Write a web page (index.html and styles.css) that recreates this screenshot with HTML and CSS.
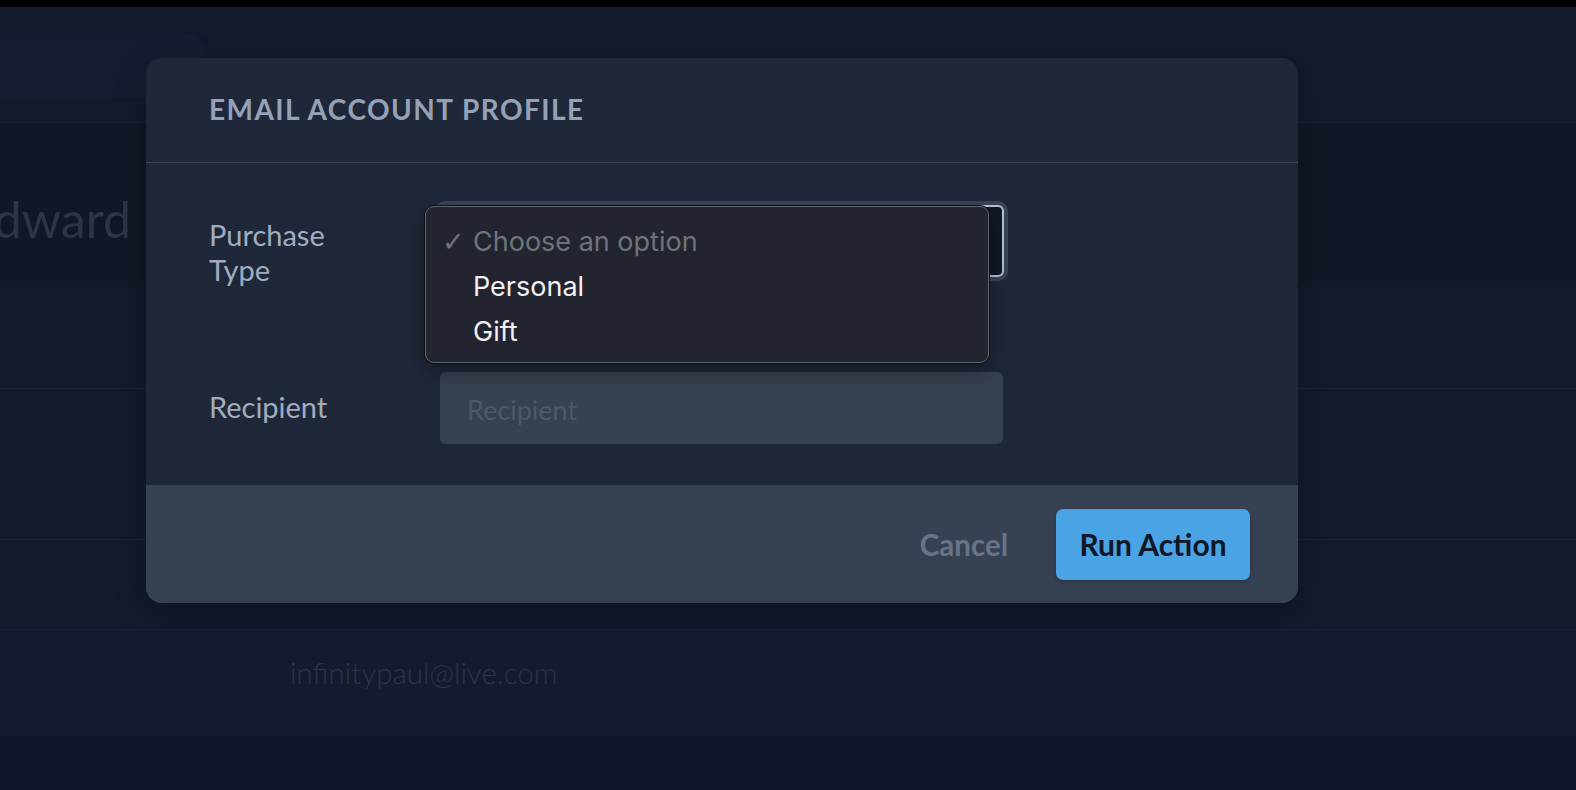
FILE: index.html
```html
<!DOCTYPE html>
<html lang="en">
<head>
  <meta charset="UTF-8">
  <meta name="viewport" content="width=device-width, initial-scale=1.0">
  <title>Email Account Profile</title>
  <link rel="stylesheet" href="styles.css">
</head>
<body>
  <div class="topbar"></div>
  <div class="page">
    <div class="page-head">
      <div class="head-card"></div>
    </div>
    <div class="row row-dark">
      <span class="name">Edward</span>
    </div>
    <div class="row row-a"></div>
    <div class="row row-b"></div>
    <div class="row row-c"></div>
    <div class="row row-d">
      <span class="email">infinitypaul@live.com</span>
    </div>
  </div>

  <div class="modal">
    <div class="modal-head">
      <h2 class="modal-title">Email Account Profile</h2>
    </div>
    <div class="modal-body">
      <div class="field">
        <label class="field-label">Purchase Type</label>
        <div class="field-input">
          <div class="select"></div>
        </div>
      </div>
      <div class="field">
        <label class="field-label single">Recipient</label>
        <div class="field-input">
          <div class="input">Recipient</div>
        </div>
      </div>
    </div>
    <div class="modal-foot">
      <span class="btn-cancel">Cancel</span>
      <span class="btn-run">Run Action</span>
    </div>

    <div class="menu">
      <div class="menu-item muted"><span class="check">✓</span>Choose an option</div>
      <div class="menu-item">Personal</div>
      <div class="menu-item">Gift</div>
    </div>
  </div>
</body>
</html>
```

FILE: styles.css
```css
* {
  padding: 0;
  margin: 0;
  box-sizing: border-box;
}
html, body {
  width: 1576px;
  height: 790px;
  overflow: hidden;
}
body {
  position: relative;
  background: #10172a;
  font-family: Lato, "Open Sans", sans-serif;
}

.topbar {
  height: 7px;
  background: #000;
}

/* page behind the overlay */
.page-head {
  height: 116px;
  padding-top: 26px;
  background: #131a2c;
  border-bottom: 1px solid #1b2336;
}
.head-card {
  width: 206px;
  height: 65px;
  background: #161d30;
  border-radius: 0 22px 0 0;
}
.row {
  display: flex;
  align-items: center;
  background: #131a2c;
  border-bottom: 1px solid #1b2336;
}
.row-dark {
  height: 160px;
  align-items: flex-start;
  padding-top: 66px;
  background: #111726;
  border-bottom: none;
}
.row-a { height: 106px; }
.row-b { height: 151px; }
.row-c { height: 90px; }
.row-d {
  height: 106px;
  background: #141b2e;
  border-bottom: none;
}
.name {
  margin-left: -34px;
  font-size: 50px;
  line-height: 60px;
  color: #2c3546;
}
.email {
  margin-left: 290px;
  margin-top: -22px;
  font-size: 29.5px;
  font-weight: 300;
  color: #2b3547;
}

/* modal */
.modal {
  position: absolute;
  left: 146px;
  top: 58px;
  width: 1152px;
  background: #1f2839;
  border-radius: 16px;
  box-shadow: 0 10px 30px rgba(0, 0, 0, 0.25);
}
.modal-head {
  height: 105px;
  padding: 0 63px;
  display: flex;
  align-items: center;
  border-bottom: 1px solid #374254;
}
.modal-title {
  font-size: 28px;
  font-weight: 700;
  text-transform: uppercase;
  letter-spacing: 1.45px;
  color: #94a1b6;
  margin-top: -2px;
}
.modal-body {
  padding: 42px 63px 41px;
  display: flex;
  flex-direction: column;
  gap: 85px;
}
.field {
  display: grid;
  grid-template-columns: 230px 565px;
}
.field-label {
  padding-top: 12px;
  font-size: 29px;
  line-height: 35px;
  color: #a1adbf;
  width: 130px;
}
.field-label.single {
  padding-top: 17px;
}
.select {
  height: 72px;
  border: 2px solid #b8c1cd;
  border-radius: 6px;
  background: #111827;
  box-shadow: 0 0 0 4px #3a4557;
}
.input {
  height: 72px;
  margin-left: 1px;
  width: 563px;
  border-radius: 6px;
  background: #364152;
  padding-left: 27px;
  display: flex;
  align-items: center;
  padding-top: 2px;
  font-size: 27px;
  color: #4d5869;
}

.modal-foot {
  height: 118px;
  padding: 0 48px;
  background: #364152;
  border-radius: 0 0 16px 16px;
  display: flex;
  align-items: center;
  justify-content: flex-end;
  gap: 48px;
}
.btn-cancel {
  font-size: 29.5px;
  font-weight: 700;
  color: #667489;
}
.btn-run {
  width: 194px;
  height: 71px;
  border-radius: 7px;
  background: #4aa3e4;
  display: flex;
  align-items: center;
  justify-content: center;
  font-size: 30px;
  font-weight: 700;
  color: #0f1726;
  box-shadow: 0 2px 4px rgba(0, 0, 0, 0.2);
}

/* native select popup */
.menu {
  position: absolute;
  left: 279px;
  top: 148px;
  width: 564px;
  height: 157px;
  padding-top: 12px;
  background: #22252f;
  border: 1px solid #64666d;
  border-radius: 9px;
  box-shadow: 0 0 0 1px #0c0e14, 0 8px 24px rgba(0, 0, 0, 0.35);
  font-family: Inter, "Noto Sans", sans-serif;
}
.menu-item {
  height: 45px;
  display: flex;
  align-items: center;
  padding-left: 47px;
  font-size: 27px;
  color: #f2f2f4;
  position: relative;
}
.menu-item.muted {
  color: #6f737c;
}
.check {
  position: absolute;
  left: 16px;
  font-size: 27px;
  font-family: "DejaVu Sans", sans-serif;
  color: #6f737c;
}
```
